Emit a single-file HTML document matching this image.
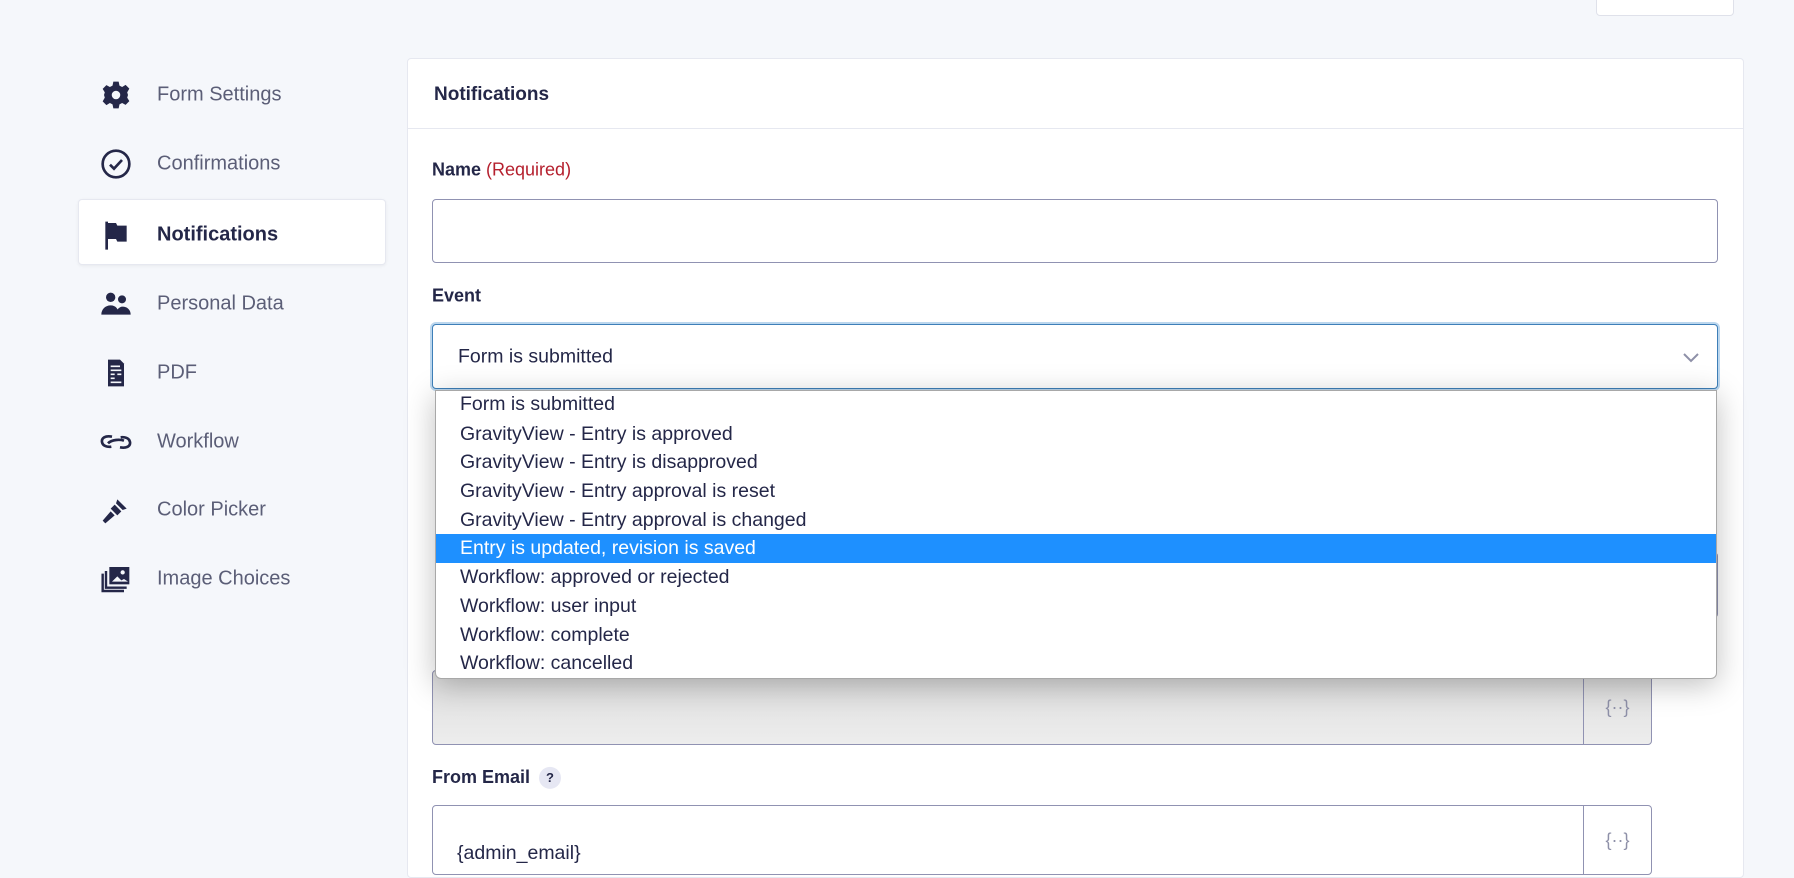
<!DOCTYPE html>
<html><head><meta charset="utf-8"><style>
*{box-sizing:border-box;margin:0;padding:0}
body{width:1794px;height:853px;overflow:hidden;background:#f5f7fb;font-family:"Liberation Sans",sans-serif;position:relative;color:#242748}
.abs{position:absolute}
.nav{position:absolute;left:157px;font-size:20px;color:#5b5e77;transform:translateY(-50%)}
.ico{position:absolute;left:100px;width:32px;height:32px;transform:translateY(-50%)}
.card{left:407px;top:58px;width:1337px;height:820px;background:#fff;border:1px solid #e6e8f0;border-radius:4px}
.lbl{position:absolute;left:432px;font-size:18px;font-weight:bold;color:#242748;transform:translateY(-50%)}
.inp{position:absolute;border:1px solid #9092b2;border-radius:4px;background:#fff}
.dd{left:435px;top:390px;width:1282px;height:289px;background:#fff;border:1px solid #a8a8a8;border-radius:0 0 6px 6px;box-shadow:0 6px 30px rgba(0,0,0,.25);z-index:5}
.dd div{height:28.7px;line-height:28.7px;padding-left:24px;font-size:19.5px;color:#242748}
.dd .sel{background:#1e90ff;color:#fff}
.mt{position:absolute;right:0;top:0;bottom:0;width:68px;border-left:1px solid #9092b2;color:#8e90a8;font-size:18px;display:flex;align-items:center;justify-content:center}
</style></head><body>
<div class="abs" style="left:1596px;top:-4px;width:138px;height:20px;background:#fff;border:1px solid #dfe1ea;border-radius:4px"></div>

<div class="abs" style="left:78px;top:199px;width:308px;height:66px;background:#fff;border:1px solid #e6e8f0;border-radius:4px;box-shadow:0 1px 3px rgba(0,0,0,.06)"></div>

<svg class="ico" style="top:95px" viewBox="0 0 24 24"><path fill="#242748" d="M10 2h4l.6 3 2 1 2.6-1.6 2.8 2.8L20.4 10l.6 2-.6 2 1.6 2.6-2.8 2.8L16.6 18l-2 1-.6 3h-4l-.6-3-2-1-2.6 1.6-2.8-2.8L3.6 14 3 12l.6-2L2 7.4l2.8-2.8L7.4 6l2-1z"/><circle cx="12" cy="12" r="3.2" fill="#f5f7fb"/></svg>
<div class="nav" style="top:95px">Form Settings</div>
<svg class="ico" style="top:164px" viewBox="0 0 24 24"><circle cx="12" cy="12" r="10" fill="none" stroke="#242748" stroke-width="2"/><path d="M7.5 12.5l3 3 6-6.5" fill="none" stroke="#242748" stroke-width="2"/></svg>
<div class="nav" style="top:164px">Confirmations</div>
<svg class="ico" style="top:235px" viewBox="0 0 24 24"><path fill="#242748" d="M4 2h2v21H4zM6 3h6l1 2h7v12h-7l-1-2H6z"/></svg>
<div class="nav" style="top:235px;color:#242748;font-weight:bold">Notifications</div>
<svg class="ico" style="top:304px" viewBox="0 0 24 24"><circle cx="8" cy="7" r="3.5" fill="#242748"/><circle cx="16.5" cy="8.5" r="3" fill="#242748"/><path fill="#242748" d="M1 20c0-4 3-7 7-7s6 3 6 7zM12 20c0-3 2-6 5-6s6 2 6 6z"/></svg>
<div class="nav" style="top:304px">Personal Data</div>
<svg class="ico" style="top:373px" viewBox="0 0 24 24"><path fill="#242748" d="M6 2h9l3 3v17H6z"/><path stroke="#f5f7fb" stroke-width="1.2" d="M8 7h7M8 10h8M8 13h3M13 13h3M8 16h3M8 19h8"/></svg>
<div class="nav" style="top:373px">PDF</div>
<svg class="ico" style="top:442px" viewBox="0 0 24 24"><path fill="none" stroke="#242748" stroke-width="2" d="M9 8C4 7 1 9 1.5 12s4 4 7 3.5M15 16c5 1 8-1 7.5-4s-4-4-7-3.5M6 13c3-3 9-3 12-2"/></svg>
<div class="nav" style="top:442px">Workflow</div>
<svg class="ico" style="top:510px" viewBox="0 0 24 24"><path fill="#242748" d="M13 4l7 7-3 1-5-5zM11 8l5 5-3 3-5-5zM8 13l3 3-7 6-2-2z"/></svg>
<div class="nav" style="top:510px">Color Picker</div>
<svg class="ico" style="top:579px" viewBox="0 0 24 24"><path fill="none" stroke="#242748" stroke-width="1.8" d="M2 8v13h16M4.5 6v12.5H20"/><rect x="7" y="3" width="15" height="13" fill="#242748"/><circle cx="17" cy="7" r="1.6" fill="#f5f7fb"/><path fill="#f5f7fb" d="M9 14l4-4 3 3 2-1 3 2z"/></svg>
<div class="nav" style="top:579px">Image Choices</div>

<div class="abs card"></div>
<div class="abs" style="left:434px;top:95px;transform:translateY(-50%);font-size:19px;font-weight:bold;color:#242748">Notifications</div>
<div class="abs" style="left:408px;top:128px;width:1335px;height:1px;background:#e6e8f0"></div>

<div class="lbl" style="top:170px">Name <span style="color:#b5202e;font-weight:normal">(Required)</span></div>
<div class="inp" style="left:432px;top:199px;width:1286px;height:64px"></div>
<div class="lbl" style="top:296px">Event</div>
<div class="inp" style="left:432px;top:324px;width:1286px;height:65px;border:1.5px solid #3e7fb8;box-shadow:0 0 0 2px #bcd7ee"></div>
<div class="abs" style="left:458px;top:357px;transform:translateY(-50%);font-size:19.5px;color:#242748">Form is submitted</div>
<svg class="abs" style="left:1682px;top:352px" width="18" height="12" viewBox="0 0 18 12"><path d="M2 2l7 7 7-7" fill="none" stroke="#8e90a8" stroke-width="2"/></svg>

<div class="inp" style="left:1690px;top:552px;width:28px;height:66px"></div>

<div class="abs dd">
<div style="line-height:26px">Form is submitted</div>
<div>GravityView - Entry is approved</div>
<div>GravityView - Entry is disapproved</div>
<div>GravityView - Entry approval is reset</div>
<div>GravityView - Entry approval is changed</div>
<div class="sel">Entry is updated, revision is saved</div>
<div>Workflow: approved or rejected</div>
<div>Workflow: user input</div>
<div>Workflow: complete</div>
<div>Workflow: cancelled</div>
</div>

<div class="inp" style="left:432px;top:670px;width:1220px;height:75px;background:linear-gradient(#dcdcdc,#ededed)"><div class="mt">{··}</div></div>

<div class="lbl" style="top:778px">From Email <span style="display:inline-block;width:22px;height:22px;border-radius:50%;background:#e6e7f3;font-size:13px;text-align:center;line-height:22px;vertical-align:middle;margin-left:4px">?</span></div>
<div class="inp" style="left:432px;top:805px;width:1220px;height:70px"><div class="abs" style="left:24px;top:36px;font-size:19.5px;color:#242748">{admin_email}</div><div class="mt">{··}</div></div>
</body></html>
